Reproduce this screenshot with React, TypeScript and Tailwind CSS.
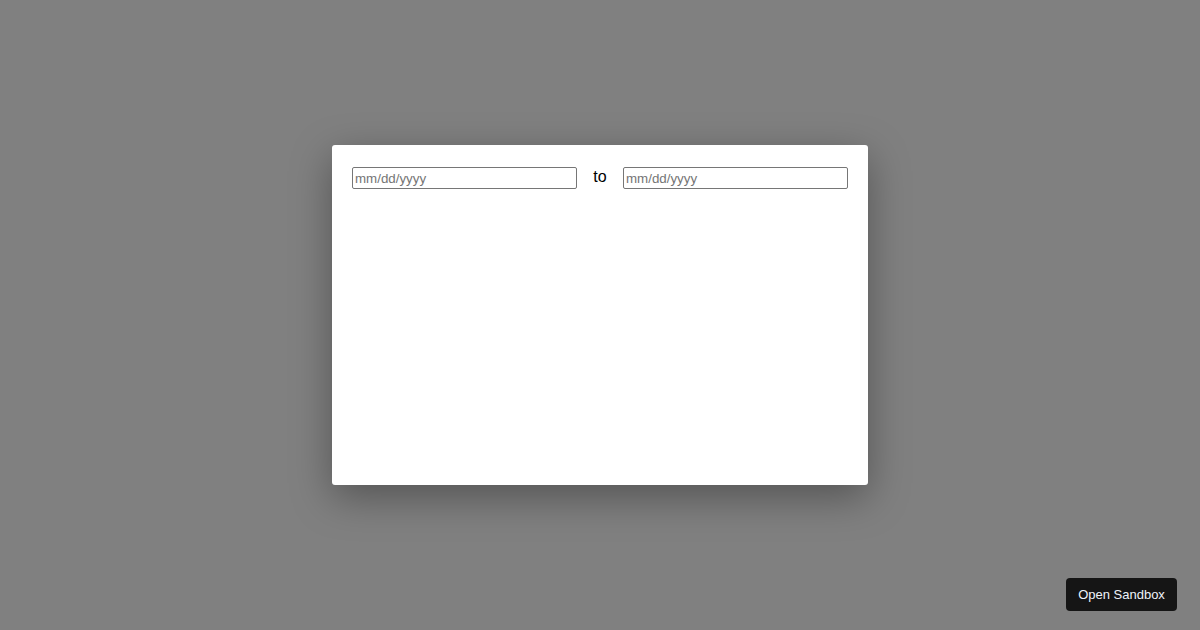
import React from "react";

export default function App() {
  return (
    <div className="relative w-[1200px] h-[630px] bg-[#808080] flex items-center justify-center overflow-hidden font-['Liberation_Sans',Arial,sans-serif]">
      <div className="w-[536px] h-[340px] bg-white rounded-[3px] shadow-[0_12px_40px_rgba(0,0,0,0.35)] px-5 pt-[22px]">
        <div className="flex items-center">
          <input
            type="text"
            placeholder="mm/dd/yyyy"
            className="w-[225px] h-[22px] border border-[#767676] rounded-[2px] px-[2px] text-[13.33px] text-black placeholder:text-[#757575] outline-none bg-white font-['Liberation_Sans',Arial,sans-serif]"
          />
          <span className="flex-1 text-center text-[16px] text-black leading-none -mt-[2px]">to</span>
          <input
            type="text"
            placeholder="mm/dd/yyyy"
            className="w-[225px] h-[22px] border border-[#767676] rounded-[2px] px-[2px] text-[13.33px] text-black placeholder:text-[#757575] outline-none bg-white font-['Liberation_Sans',Arial,sans-serif]"
          />
        </div>
      </div>
      <div className="absolute right-[23px] bottom-[19px] w-[111px] h-[33px] bg-[#151515] rounded-[4px] flex items-center justify-center text-[#eef3fa] text-[13px] font-['Liberation_Sans',Arial,sans-serif]">
        Open Sandbox
      </div>
    </div>
  );
}
